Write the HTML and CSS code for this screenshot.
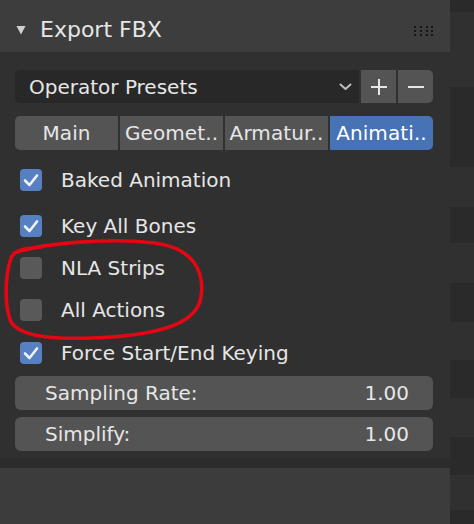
FILE: index.html
```html
<!DOCTYPE html>
<html lang="en">
<head>
<meta charset="utf-8">
<title>Export FBX</title>
<link rel="stylesheet" href="styles.css">
</head>
<body>
<div class="screen">
  <div class="panel">
    <div class="panel-header">
      <svg class="disclosure" width="10" height="10" viewBox="0 0 10 10"><path d="M0.5 1 H9.5 L5 9.5 Z" fill="#cfcfcf"/></svg>
      <span class="panel-title">Export FBX</span>
      <svg class="grip" width="20" height="10" viewBox="0 0 20 10">
        <g fill="#161616">
          <rect x="0" y="0" width="2" height="2"/><rect x="6" y="0" width="2" height="2"/><rect x="12" y="0" width="2" height="2"/><rect x="17" y="0" width="2" height="2"/>
          <rect x="0" y="4" width="2" height="2"/><rect x="6" y="4" width="2" height="2"/><rect x="12" y="4" width="2" height="2"/><rect x="17" y="4" width="2" height="2"/>
          <rect x="0" y="8" width="2" height="2"/><rect x="6" y="8" width="2" height="2"/><rect x="12" y="8" width="2" height="2"/><rect x="17" y="8" width="2" height="2"/>
        </g>
      </svg>
    </div>
    <div class="panel-body">
      <div class="preset-row">
        <div class="preset-select">
          <span class="preset-label">Operator Presets</span>
          <svg class="chevron" width="13" height="8" viewBox="0 0 13 8"><path d="M1.5 1.5 L6.5 6 L11.5 1.5" fill="none" stroke="#bdbdbd" stroke-width="2" stroke-linecap="round" stroke-linejoin="round"/></svg>
        </div>
        <div class="icon-btn">
          <svg width="18" height="18" viewBox="0 0 18 18"><path d="M9 1 V17 M1 9 H17" stroke="#e6e6e6" stroke-width="2"/></svg>
        </div>
        <div class="icon-btn">
          <svg width="18" height="18" viewBox="0 0 18 18"><path d="M1 9 H17" stroke="#e6e6e6" stroke-width="2"/></svg>
        </div>
      </div>
      <div class="tabs">
        <div class="tab">Main</div>
        <div class="tab">Geomet..</div>
        <div class="tab">Armatur..</div>
        <div class="tab active">Animati..</div>
      </div>
      <div class="checks">
        <div class="check-row first">
          <span class="box on"><svg width="22" height="22" viewBox="0 0 22 22"><path d="M5 11.5 L9.5 16 L17 6.5" fill="none" stroke="#eef2f8" stroke-width="2.6" stroke-linecap="round" stroke-linejoin="round"/></svg></span>
          <span class="check-label">Baked Animation</span>
        </div>
        <div class="check-row wide">
          <span class="box on"><svg width="22" height="22" viewBox="0 0 22 22"><path d="M5 11.5 L9.5 16 L17 6.5" fill="none" stroke="#eef2f8" stroke-width="2.6" stroke-linecap="round" stroke-linejoin="round"/></svg></span>
          <span class="check-label">Key All Bones</span>
        </div>
        <div class="check-row">
          <span class="box"></span>
          <span class="check-label">NLA Strips</span>
        </div>
        <div class="check-row">
          <span class="box"></span>
          <span class="check-label">All Actions</span>
        </div>
        <div class="check-row loose">
          <span class="box on"><svg width="22" height="22" viewBox="0 0 22 22"><path d="M5 11.5 L9.5 16 L17 6.5" fill="none" stroke="#eef2f8" stroke-width="2.6" stroke-linecap="round" stroke-linejoin="round"/></svg></span>
          <span class="check-label">Force Start/End Keying</span>
        </div>
      </div>
      <div class="fields">
        <div class="field"><span>Sampling Rate:</span><span>1.00</span></div>
        <div class="field"><span>Simplify:</span><span>1.00</span></div>
      </div>
    </div>
    <div class="panel-shadow"></div>
    <div class="panel-rest"></div>
  </div>
  <div class="strip">
    <div class="stripe d h12"></div>
    <div class="stripe l h75"></div>
    <div class="stripe d h80"></div>
    <div class="stripe l h40"></div>
    <div class="stripe d h36"></div>
    <div class="stripe l h40"></div>
    <div class="stripe d h39"></div>
    <div class="stripe l h38"></div>
    <div class="stripe d h38"></div>
    <div class="stripe l h39"></div>
    <div class="stripe d h38"></div>
    <div class="stripe l h35"></div>
    <div class="stripe d fill"></div>
  </div>
  <svg class="annotation" width="474" height="524" viewBox="0 0 474 524">
    <path d="M14 253 C40 244, 105 237, 155 243 C192 248, 205 270, 201 297 C197 322, 165 333, 112 337 C62 340, 22 339, 11 322 C4 305, 5 276, 11 258 C15 249, 28 248, 42 247" fill="none" stroke="#e30613" stroke-width="3.6" stroke-linecap="round" stroke-linejoin="round"/>
  </svg>
</div>
</body>
</html>
```

FILE: styles.css
```css
html, body {
  margin: 0;
  padding: 0;
  background: #3c3c3c;
}

body {
  font-family: "DejaVu Sans", "Noto Sans", sans-serif;
  color: #e6e6e6;
  overflow: hidden;
}

.screen {
  position: relative;
  display: flex;
  width: 474px;
  height: 524px;
}

.panel {
  width: 450px;
  display: flex;
  flex-direction: column;
}

.panel-header {
  height: 52px;
  box-sizing: border-box;
  padding-top: 17px;
  display: flex;
  align-items: flex-start;
  background: #3d3d3d;
}

.disclosure {
  margin-left: 16px;
  margin-top: 8px;
  width: 10px;
  height: 10px;
}

.panel-title {
  margin-left: 14px;
  font-size: 22px;
  line-height: 26px;
  color: #e6e6e6;
}

.grip {
  margin-left: auto;
  margin-right: 16px;
  margin-top: 9px;
}

.panel-body {
  background: #303030;
  padding: 18px 17px 7px 15px;
}

.preset-row {
  display: flex;
  height: 33px;
  gap: 2px;
}

.preset-select {
  flex: 1;
  display: flex;
  align-items: center;
  background: #282828;
  border-radius: 5px 0 0 5px;
  padding-left: 14px;
  padding-right: 7px;
}

.preset-label {
  flex: 1;
  font-size: 20px;
  line-height: 24px;
}

.chevron {
  display: block;
}

.icon-btn {
  width: 35px;
  display: flex;
  align-items: center;
  justify-content: center;
  background: #545454;
}

.icon-btn:last-child {
  border-radius: 0 5px 5px 0;
}

.tabs {
  display: flex;
  gap: 2px;
  margin-top: 13px;
  height: 34px;
}

.tab {
  flex: 1;
  display: flex;
  align-items: center;
  justify-content: center;
  background: #545454;
  font-size: 20px;
  white-space: nowrap;
  overflow: hidden;
  letter-spacing: 0.1px;
}

.tab:first-child {
  border-radius: 5px 0 0 5px;
}

.tab:last-child {
  border-radius: 0 5px 5px 0;
}

.tab.active {
  background: #4772b3;
  color: #ffffff;
}

.checks {
  display: flex;
  flex-direction: column;
}

.check-row {
  display: flex;
  align-items: center;
  height: 22px;
  margin-top: 20px;
  padding-left: 5px;
}

.check-row.first {
  margin-top: 19px;
}

.check-row.wide {
  margin-top: 24px;
}

.check-row.loose {
  margin-top: 21px;
}

.box {
  width: 22px;
  height: 22px;
  border-radius: 4px;
  background: #595959;
  flex: none;
}

.box.on {
  background: #5680c2;
}

.box svg {
  display: block;
}

.check-label {
  margin-left: 19px;
  font-size: 20px;
  line-height: 22px;
}

.fields {
  display: flex;
  flex-direction: column;
  gap: 7px;
  margin-top: 12px;
}

.field {
  height: 34px;
  display: flex;
  align-items: center;
  justify-content: space-between;
  background: #545454;
  border-radius: 6px;
  padding: 0 24px 0 30px;
  font-size: 20px;
}

.panel-shadow {
  height: 10px;
  background: #2c2c2c;
}

.panel-rest {
  flex: 1;
  background: #3c3c3c;
}

.strip {
  width: 24px;
  display: flex;
  flex-direction: column;
}

.stripe.d { background: #2a2a2a; }
.stripe.l { background: #303030; }
.h12 { height: 12px; }
.h35 { height: 35px; }
.h36 { height: 36px; }
.h38 { height: 38px; }
.h39 { height: 39px; }
.h40 { height: 40px; }
.h75 { height: 75px; }
.h80 { height: 80px; }
.stripe.fill { flex: 1; }

.annotation {
  position: absolute;
  top: 0;
  left: 0;
  pointer-events: none;
}
```
